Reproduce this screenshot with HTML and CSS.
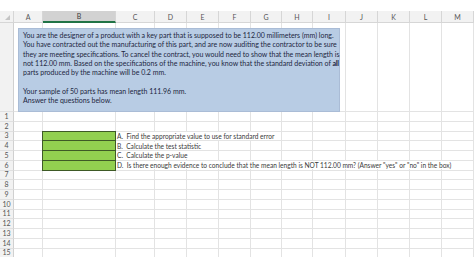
FILE: index.html
```html
<!DOCTYPE html>
<html>
<head>
<meta charset="utf-8">
<link rel="stylesheet" href="styles.css">
</head>
<body>
<div class="sheet">
  <div class="corner"><span class="tri"></span></div>
  <div class="ch">A</div><div class="ch sel">B</div><div class="ch">C</div><div class="ch">D</div><div class="ch">E</div><div class="ch">F</div><div class="ch">G</div><div class="ch">H</div><div class="ch">I</div><div class="ch">J</div><div class="ch">K</div><div class="ch">L</div><div class="ch">M</div>

  <div class="rh"></div><div class="c"></div><div class="c"></div><div class="c"></div><div class="c"></div><div class="c"></div><div class="c"></div><div class="c"></div><div class="c"></div><div class="c"></div><div class="c"></div><div class="c"></div><div class="c"></div><div class="c"></div>

  <div class="rh">1</div><div class="c"></div><div class="c"></div><div class="c"></div><div class="c"></div><div class="c"></div><div class="c"></div><div class="c"></div><div class="c"></div><div class="c"></div><div class="c"></div><div class="c"></div><div class="c"></div><div class="c"></div>
  <div class="rh">2</div><div class="c"></div><div class="c"></div><div class="c"></div><div class="c"></div><div class="c"></div><div class="c"></div><div class="c"></div><div class="c"></div><div class="c"></div><div class="c"></div><div class="c"></div><div class="c"></div><div class="c"></div>
  <div class="rh">3</div><div class="c"></div><div class="c ans"></div><div class="c q"><span>A.&nbsp; Find the appropriate value to use for standard error</span></div><div class="c"></div><div class="c"></div><div class="c"></div><div class="c"></div><div class="c"></div><div class="c"></div><div class="c"></div><div class="c"></div><div class="c"></div><div class="c"></div>
  <div class="rh">4</div><div class="c"></div><div class="c ans"></div><div class="c q"><span>B.&nbsp; Calculate the test statistic</span></div><div class="c"></div><div class="c"></div><div class="c"></div><div class="c"></div><div class="c"></div><div class="c"></div><div class="c"></div><div class="c"></div><div class="c"></div><div class="c"></div>
  <div class="rh">5</div><div class="c"></div><div class="c ans"></div><div class="c q"><span>C.&nbsp; Calculate the p-value</span></div><div class="c"></div><div class="c"></div><div class="c"></div><div class="c"></div><div class="c"></div><div class="c"></div><div class="c"></div><div class="c"></div><div class="c"></div><div class="c"></div>
  <div class="rh">6</div><div class="c"></div><div class="c ans"></div><div class="c q"><span>D.&nbsp; Is there enough evidence to conclude that the mean length is NOT 112.00 mm? (Answer "yes" or "no" in the box)</span></div><div class="c"></div><div class="c"></div><div class="c"></div><div class="c"></div><div class="c"></div><div class="c"></div><div class="c"></div><div class="c"></div><div class="c"></div><div class="c"></div>
  <div class="rh">7</div><div class="c"></div><div class="c"></div><div class="c"></div><div class="c"></div><div class="c"></div><div class="c"></div><div class="c"></div><div class="c"></div><div class="c"></div><div class="c"></div><div class="c"></div><div class="c"></div><div class="c"></div>
  <div class="rh">8</div><div class="c"></div><div class="c"></div><div class="c"></div><div class="c"></div><div class="c"></div><div class="c"></div><div class="c"></div><div class="c"></div><div class="c"></div><div class="c"></div><div class="c"></div><div class="c"></div><div class="c"></div>
  <div class="rh">9</div><div class="c"></div><div class="c"></div><div class="c"></div><div class="c"></div><div class="c"></div><div class="c"></div><div class="c"></div><div class="c"></div><div class="c"></div><div class="c"></div><div class="c"></div><div class="c"></div><div class="c"></div>
  <div class="rh">10</div><div class="c"></div><div class="c"></div><div class="c"></div><div class="c"></div><div class="c"></div><div class="c"></div><div class="c"></div><div class="c"></div><div class="c"></div><div class="c"></div><div class="c"></div><div class="c"></div><div class="c"></div>
  <div class="rh">11</div><div class="c"></div><div class="c"></div><div class="c"></div><div class="c"></div><div class="c"></div><div class="c"></div><div class="c"></div><div class="c"></div><div class="c"></div><div class="c"></div><div class="c"></div><div class="c"></div><div class="c"></div>
  <div class="rh">12</div><div class="c"></div><div class="c"></div><div class="c"></div><div class="c"></div><div class="c"></div><div class="c"></div><div class="c"></div><div class="c"></div><div class="c"></div><div class="c"></div><div class="c"></div><div class="c"></div><div class="c"></div>
  <div class="rh">13</div><div class="c"></div><div class="c"></div><div class="c"></div><div class="c"></div><div class="c"></div><div class="c"></div><div class="c"></div><div class="c"></div><div class="c"></div><div class="c"></div><div class="c"></div><div class="c"></div><div class="c"></div>
  <div class="rh">14</div><div class="c"></div><div class="c"></div><div class="c"></div><div class="c"></div><div class="c"></div><div class="c"></div><div class="c"></div><div class="c"></div><div class="c"></div><div class="c"></div><div class="c"></div><div class="c"></div><div class="c"></div>
  <div class="rh">15</div><div class="c"></div><div class="c"></div><div class="c"></div><div class="c"></div><div class="c"></div><div class="c"></div><div class="c"></div><div class="c"></div><div class="c"></div><div class="c"></div><div class="c"></div><div class="c"></div><div class="c"></div>

  <div class="textbox">You are the designer of a product with a key part that is supposed to be 112.00 millimeters (mm) long.<br>You have contracted out the manufacturing of this part, and are now auditing the contractor to be sure<br>they are meeting specifications. To cancel the contract, you would need to show that the mean length is<br>not 112.00 mm. Based on the specifications of the machine, you know that the standard deviation of <b>all</b><br>parts produced by the machine will be 0.2 mm.<br><br>Your sample of 50 parts has mean length 111.96 mm.<br>Answer the questions below.</div>
</div>
</body>
</html>
```

FILE: styles.css
```css
html, body {
  margin: 0;
  padding: 0;
  background: #ffffff;
  overflow: hidden;
}
.sheet {
  position: relative;
  padding-top: 11px;
  display: grid;
  grid-template-columns: 14px 29px 73px 39px 32px 32px 32px 31px 31px 33px 32px 32px 32px 32px;
  grid-template-rows: 12px 89px repeat(15, 9.75px);
  font-family: Lato, "Liberation Sans", sans-serif;
}
.corner {
  background: #f2f2f2;
  border-right: 1px solid #d6d6d6;
  border-bottom: 1px solid #d6d6d6;
  box-sizing: border-box;
  position: relative;
}
.tri {
  position: absolute;
  right: 3px;
  bottom: 2px;
  width: 0;
  height: 0;
  border-left: 5px solid transparent;
  border-bottom: 5px solid #c4c4c4;
}
.ch {
  background: #f2f2f2;
  border-right: 1px solid #d6d6d6;
  border-bottom: 1px solid #d6d6d6;
  box-sizing: border-box;
  font-size: 7px;
  color: #555555;
  display: flex;
  align-items: center;
  justify-content: center;
}
.ch.sel {
  background: #d2d2d2;
  border-bottom: 2px solid #217346;
  color: #3a3a3a;
}
.rh {
  background: #f2f2f2;
  border-right: 1px solid #d0d0d0;
  border-bottom: 1px solid #e0e0e0;
  box-sizing: border-box;
  font-size: 7px;
  color: #555555;
  display: flex;
  align-items: center;
  justify-content: center;
  line-height: 1;
}
.c {
  border-right: 1px solid #e3e3e3;
  border-bottom: 1px solid #e3e3e3;
  box-sizing: border-box;
}
.c.ans {
  background: #92d050;
  border: 1px solid #3e5a26;
  margin-top: -1px;
  margin-left: -1px;
  height: calc(100% + 1px);
  width: calc(100% + 1px);
}
.c.q {
  position: relative;
  z-index: 1;
  overflow: visible;
  white-space: nowrap;
  font-size: 6.6px;
  color: #3a3a3a;
  display: flex;
  align-items: center;
  padding-left: 1px;
}
.c.q span {
  background: #ffffff;
  line-height: 8px;
}
.textbox {
  position: absolute;
  left: 18px;
  top: 28px;
  width: 322px;
  height: 84px;
  box-sizing: border-box;
  background: #b8cce4;
  border: 1px solid #aabcd6;
  padding: 2px 0 0 4px;
  font-size: 7px;
  line-height: 9.3px;
  color: #1c2640;
  white-space: nowrap;
  z-index: 2;
}
.textbox b {
  font-weight: 700;
  letter-spacing: -0.3px;
}
```
